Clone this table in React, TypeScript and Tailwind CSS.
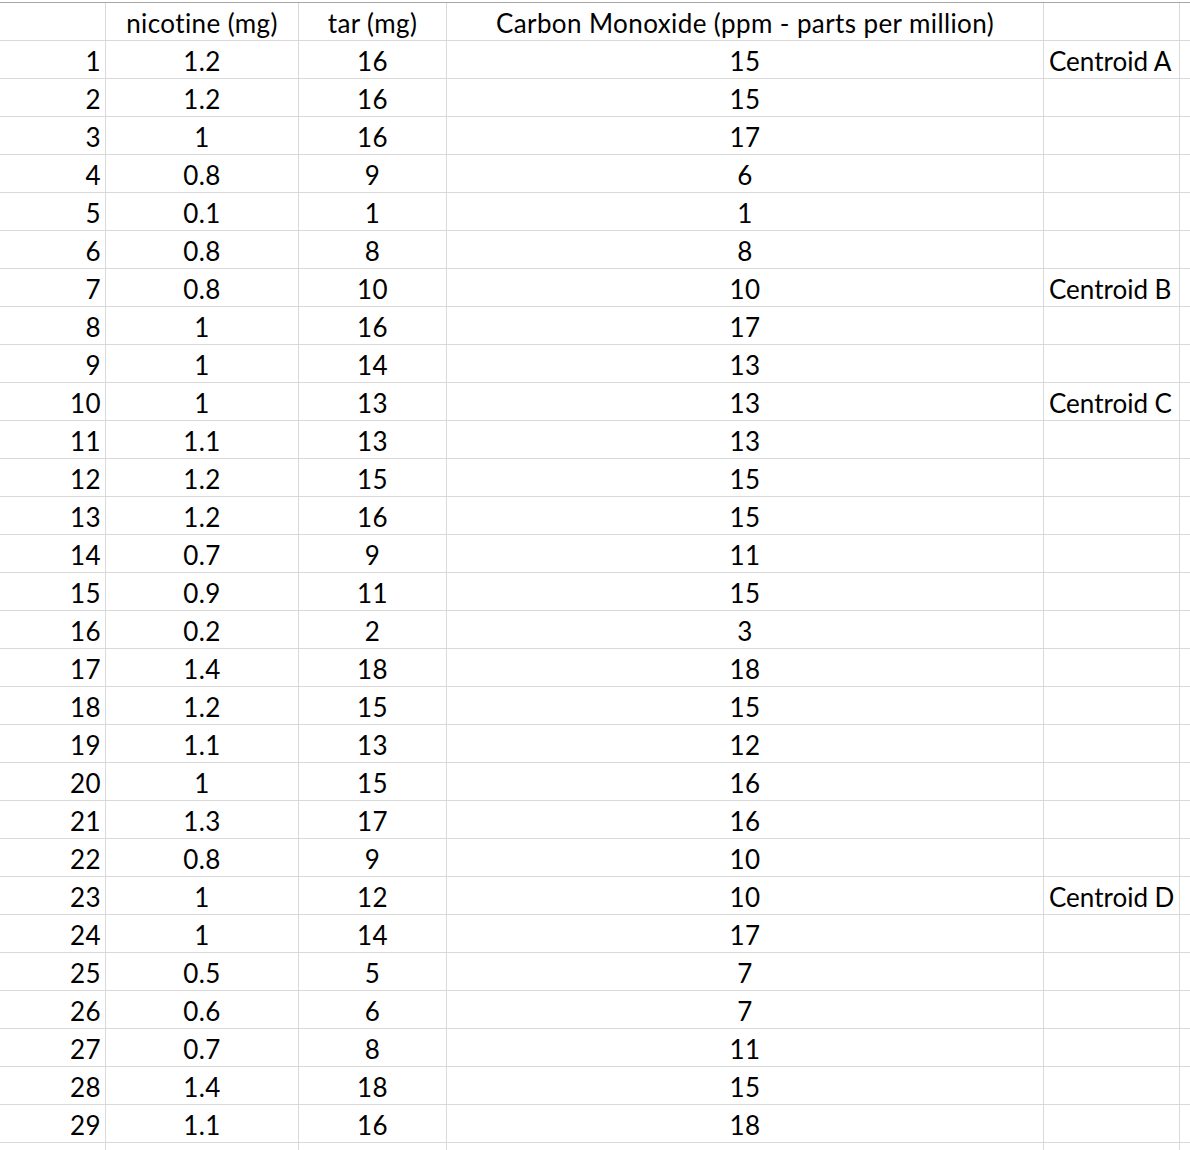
import React from "react";

const rows: [string, string, string, string][] = [
  ["1.2", "16", "15", "Centroid A"],
  ["1.2", "16", "15", ""],
  ["1", "16", "17", ""],
  ["0.8", "9", "6", ""],
  ["0.1", "1", "1", ""],
  ["0.8", "8", "8", ""],
  ["0.8", "10", "10", "Centroid B"],
  ["1", "16", "17", ""],
  ["1", "14", "13", ""],
  ["1", "13", "13", "Centroid C"],
  ["1.1", "13", "13", ""],
  ["1.2", "15", "15", ""],
  ["1.2", "16", "15", ""],
  ["0.7", "9", "11", ""],
  ["0.9", "11", "15", ""],
  ["0.2", "2", "3", ""],
  ["1.4", "18", "18", ""],
  ["1.2", "15", "15", ""],
  ["1.1", "13", "12", ""],
  ["1", "15", "16", ""],
  ["1.3", "17", "16", ""],
  ["0.8", "9", "10", ""],
  ["1", "12", "10", "Centroid D"],
  ["1", "14", "17", ""],
  ["0.5", "5", "7", ""],
  ["0.6", "6", "7", ""],
  ["0.7", "8", "11", ""],
  ["1.4", "18", "15", ""],
  ["1.1", "16", "18", ""],
];

const cell = "h-full border-r border-[#d9d9d9] flex items-center leading-none pt-[3px] whitespace-nowrap";

function Row({ a, b, c, d, e }: { a: string; b: string; c: string; d: string; e: string }) {
  return (
    <div className="flex h-[38px] border-b border-[#d9d9d9]">
      <div className={`${cell} w-[106px] shrink-0 justify-end pr-[4px]`}>{a}</div>
      <div className={`${cell} w-[193px] shrink-0 justify-center`}>{b}</div>
      <div className={`${cell} w-[148px] shrink-0 justify-center`}>{c}</div>
      <div className={`${cell} w-[597px] shrink-0 justify-center`}>{d}</div>
      <div className={`${cell} w-[136px] shrink-0 justify-start pl-[5px] tracking-normal`}>{e}</div>
      <div className="h-full flex-1" />
    </div>
  );
}

export default function App() {
  return (
    <div
      className="w-[1190px] h-[1150px] overflow-hidden bg-white pt-[2px] text-black text-[26px] tracking-[0.4px]"
      style={{ fontFamily: '"Lato", "Open Sans", sans-serif' }}
    >
      <div className="border-t border-[#a6a6a6]">
        <Row a="" b="nicotine (mg)" c="tar (mg)" d="Carbon Monoxide (ppm - parts per million)" e="" />
        {rows.map((r, i) => (
          <Row key={i} a={String(i + 1)} b={r[0]} c={r[1]} d={r[2]} e={r[3]} />
        ))}
        <div className="flex h-[20px]">
          <div className="h-full border-r border-[#d9d9d9] w-[106px] shrink-0" />
          <div className="h-full border-r border-[#d9d9d9] w-[193px] shrink-0" />
          <div className="h-full border-r border-[#d9d9d9] w-[148px] shrink-0" />
          <div className="h-full border-r border-[#d9d9d9] w-[597px] shrink-0" />
          <div className="h-full border-r border-[#d9d9d9] w-[136px] shrink-0" />
        </div>
      </div>
    </div>
  );
}
